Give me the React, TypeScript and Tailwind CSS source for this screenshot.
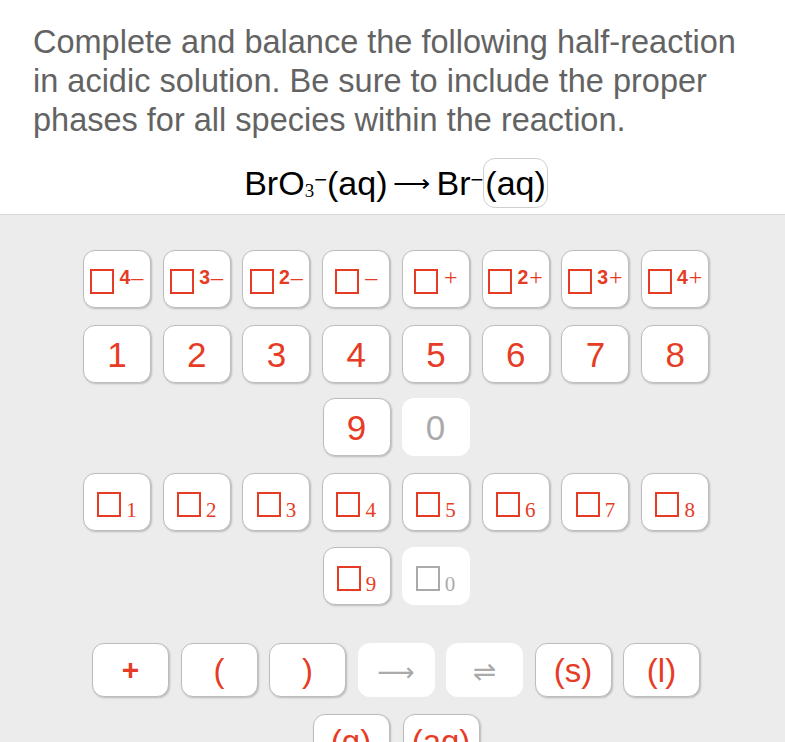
import React from "react";

const red = "text-[#e63c25]";

function Key({ children, disabled, wide }: { children: React.ReactNode; disabled?: boolean; wide?: boolean }) {
  return (
    <button
      className={`${wide ? "w-[77px] h-[54px]" : "w-[68px] h-[58px]"} flex items-center justify-center rounded-[12px] bg-white ${
        disabled ? "text-[#aaaaaa]" : `${red} border border-[#bdbdbd] shadow-[1px_1px_2px_rgba(0,0,0,0.22)]`
      }`}
    >
      {children}
    </button>
  );
}

function Box() {
  return <span className="block w-[24px] h-[25px] border-2 border-current" />;
}

function Charge({ n, sign }: { n: string; sign: string }) {
  return (
    <span className="flex items-start mt-[4px]">
      <Box />
      <span className="ml-[5px] -mt-[3px] flex items-center leading-none">
        <span className="font-bold text-[19.5px]">{n}</span>
        <span className="ml-[1px] relative -top-[1px] font-normal text-[24px] font-['Liberation_Serif',serif]">{sign}</span>
      </span>
    </span>
  );
}

function Sub({ n }: { n: string }) {
  return (
    <span className="flex items-end mt-[4px]">
      <Box />
      <span className="ml-[5px] -mb-[4px] text-[21px] leading-none font-['Liberation_Serif',serif]">{n}</span>
    </span>
  );
}

export default function App() {
  const charges = [["4", "–"], ["3", "–"], ["2", "–"], ["", "–"], ["", "+"], ["2", "+"], ["3", "+"], ["4", "+"]];
  return (
    <div className="w-[785px] h-[742px] overflow-hidden bg-white font-['Liberation_Sans',Arial,sans-serif]">
      <div className="pt-[23px] pl-[33px] pr-[40px]">
        <p className="text-[32.5px] leading-[39px] text-[#636363]">
          Complete and balance the following half-reaction in acidic solution. Be sure to include the proper phases for all species within the reaction.
        </p>
      </div>
      <div className="mt-[18px] pb-[6px] pl-[7px] flex justify-center items-center text-[34px] text-black">
        <span className="flex items-center h-[50px] whitespace-pre">
          <span>
            BrO
            <span className="text-[19px] font-['Liberation_Serif',serif] relative top-[2px]">3</span>
            <span className="text-[22px] relative -top-[8px]">−</span>
            (aq)
          </span>
          <span className="mx-[6px] font-['DejaVu_Sans',sans-serif] text-[26px] font-light">⟶</span>
          <span>
            Br<span className="text-[22px] relative -top-[8px]">−</span>
          </span>
          <span className="h-[50px] flex items-center px-[1px] border border-[#cfcfcf] rounded-[12px]">(aq)</span>
        </span>
      </div>
      <div className="border-t border-[#d6d6d6] bg-[#ececec] h-full pt-[35px] pl-[7px] flex flex-col items-center">
        <div className="grid grid-cols-8 gap-x-[12px] w-[626px] justify-items-center">
          {charges.map(([n, s], i) => (
            <Key key={i}>
              <Charge n={n} sign={s} />
            </Key>
          ))}
        </div>
        <div className="grid grid-cols-8 gap-x-[12px] w-[626px] mt-[17px] justify-items-center">
          {["1", "2", "3", "4", "5", "6", "7", "8"].map((d) => (
            <Key key={d}>
              <span className="text-[35px] leading-none">{d}</span>
            </Key>
          ))}
        </div>
        <div className="flex gap-x-[11px] mt-[15px]">
          <Key>
            <span className="text-[35px] leading-none">9</span>
          </Key>
          <Key disabled>
            <span className="text-[35px] leading-none">0</span>
          </Key>
        </div>
        <div className="grid grid-cols-8 gap-x-[12px] w-[626px] mt-[17px] justify-items-center">
          {["1", "2", "3", "4", "5", "6", "7", "8"].map((d) => (
            <Key key={d}>
              <Sub n={d} />
            </Key>
          ))}
        </div>
        <div className="flex gap-x-[11px] mt-[16px]">
          <Key>
            <Sub n="9" />
          </Key>
          <Key disabled>
            <Sub n="0" />
          </Key>
        </div>
        <div className="flex gap-x-[11.5px] mt-[38px]">
          <Key wide>
            <span className="text-[30px] font-bold leading-none">+</span>
          </Key>
          <Key wide>
            <span className="text-[33px] leading-none">(</span>
          </Key>
          <Key wide>
            <span className="text-[33px] leading-none">)</span>
          </Key>
          <Key wide disabled>
            <span className="text-[26px] leading-none font-['DejaVu_Sans',sans-serif] mt-[4px]">⟶</span>
          </Key>
          <Key wide disabled>
            <span className="text-[28px] leading-none font-['DejaVu_Sans',sans-serif] mt-[4px]">⇌</span>
          </Key>
          <Key wide>
            <span className="text-[33px] leading-none">(s)</span>
          </Key>
          <Key wide>
            <span className="text-[33px] leading-none">(l)</span>
          </Key>
        </div>
        <div className="flex gap-x-[13px] mt-[17px]">
          <Key wide>
            <span className="text-[33px] leading-none">(g)</span>
          </Key>
          <Key wide>
            <span className="text-[33px] leading-none">(aq)</span>
          </Key>
        </div>
      </div>
    </div>
  );
}
